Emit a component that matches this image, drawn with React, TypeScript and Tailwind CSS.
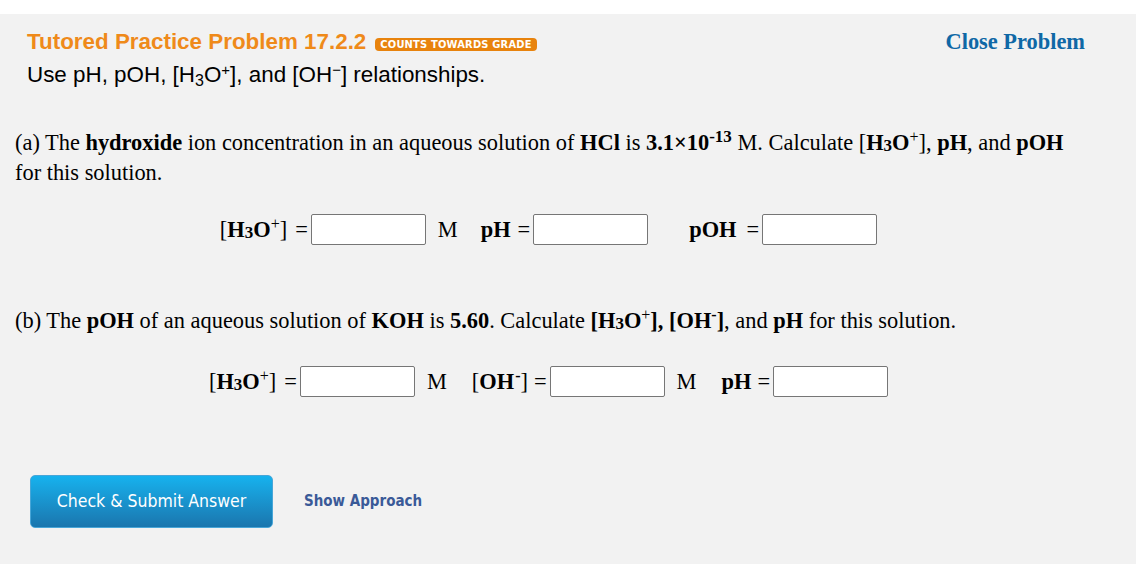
import React from 'react';

const serif = "font-['Liberation_Serif','Times_New_Roman',serif]";
const sans = "font-['Liberation_Sans',Arial,sans-serif]";

const H3O = () => (
    <b>
        H<sub className="text-[17px] relative top-[1px]">3</sub>O<sup className="text-[16px] font-normal">+</sup>
    </b>
);

const Field: React.FC = () => (
    <input
        type="text"
        className="h-[31px] w-[115px] bg-white border border-[#767676] rounded-[2px] outline-none mx-[3px]"
    />
);

const Eq: React.FC<{ gap?: string }> = ({ gap = 'ml-[6px]' }) => <span className={gap}>=</span>;

const App: React.FC = () => {
    return (
        <div className="w-[1136px] h-[564px] bg-white pt-[14px]">
            <main className="h-[550px] bg-[#f2f2f2] text-black">
                {/* header */}
                <div className="flex justify-between items-start pl-[27px] pr-[51px] pt-[15px]">
                    <div>
                        <div className="flex items-start gap-[9px]">
                            <h1 className={`${sans} font-bold text-[22.4px] leading-[26px] text-[#ef8a1a]`}>
                                Tutored Practice Problem 17.2.2
                            </h1>
                            <span className="mt-[9px] px-[5px] h-[13px] flex items-center rounded-[4px] bg-[#e8830d] text-white font-['DejaVu_Sans_Condensed','DejaVu_Sans',sans-serif] font-bold text-[11px] leading-none tracking-[0.2px]">
                                COUNTS TOWARDS GRADE
                            </span>
                        </div>
                        <p className={`${sans} text-[22.4px] leading-[26px] mt-[7px]`}>
                            Use pH, pOH, [H<sub className="text-[16px]">3</sub>O<sup className="text-[15px]">+</sup>], and [OH<sup className="text-[15px]">−</sup>] relationships.
                        </p>
                    </div>
                    <a className={`${serif} font-bold text-[22.4px] leading-[26px] text-[#0f68a6] cursor-pointer`}>Close Problem</a>
                </div>

                {/* part a */}
                <div className={`${serif} text-[22.4px] leading-[30px] px-[15px] mt-[40px]`}>
                    <p>
                        (a) The <b>hydroxide</b> ion concentration in an aqueous solution of <b>HCl</b> is{' '}
                        <b>3.1×10<sup className="text-[17px]">-13</sup></b> M. Calculate [<H3O />], <b>pH</b>, and <b>pOH</b>
                        <br />
                        for this solution.
                    </p>
                    <div className="flex justify-center items-center mt-[26px] w-[1070px]">
                        <span>[<H3O />]<Eq gap="ml-[8px]" /></span>
                        <Field />
                        <span className="ml-[9px]">M</span>
                        <span className="ml-[23px]"><b>pH</b><Eq gap="ml-[7px]" /></span>
                        <Field />
                        <span className="ml-[38px]"><b>pOH</b><Eq gap="ml-[10px]" /></span>
                        <Field />
                    </div>

                    <p className="mt-[61px]">
                        (b) The <b>pOH</b> of an aqueous solution of <b>KOH</b> is <b>5.60</b>. Calculate{' '}
                        <b>[<H3O />], [OH<sup className="text-[16px]">-</sup>]</b>, and <b>pH</b> for this solution.
                    </p>
                    <div className="flex justify-center items-center mt-[30px] w-[1070px]">
                        <span>[<H3O />]<Eq gap="ml-[8px]" /></span>
                        <Field />
                        <span className="ml-[9px]">M</span>
                        <span className="ml-[25px]">[<b>OH<sup className="text-[16px] ml-[1px]">-</sup></b>]<Eq /></span>
                        <Field />
                        <span className="ml-[9px]">M</span>
                        <span className="ml-[25px]"><b>pH</b><Eq /></span>
                        <Field />
                    </div>
                </div>

                {/* actions */}
                <div className="flex items-center pl-[30px] mt-[78px]">
                    <button className="w-[243px] h-[53px] rounded-[5px] bg-gradient-to-b from-[#16b2ee] to-[#1a76ae] border border-[#48a6d8] text-white font-['DejaVu_Sans_Condensed','DejaVu_Sans',sans-serif] text-[17.5px]">
                        Check &amp; Submit Answer
                    </button>
                    <a className="ml-[31px] font-['DejaVu_Sans_Condensed','DejaVu_Sans',sans-serif] font-bold text-[15px] text-[#3a5a98] cursor-pointer">
                        Show Approach
                    </a>
                </div>
            </main>
        </div>
    );
};

export default App;
